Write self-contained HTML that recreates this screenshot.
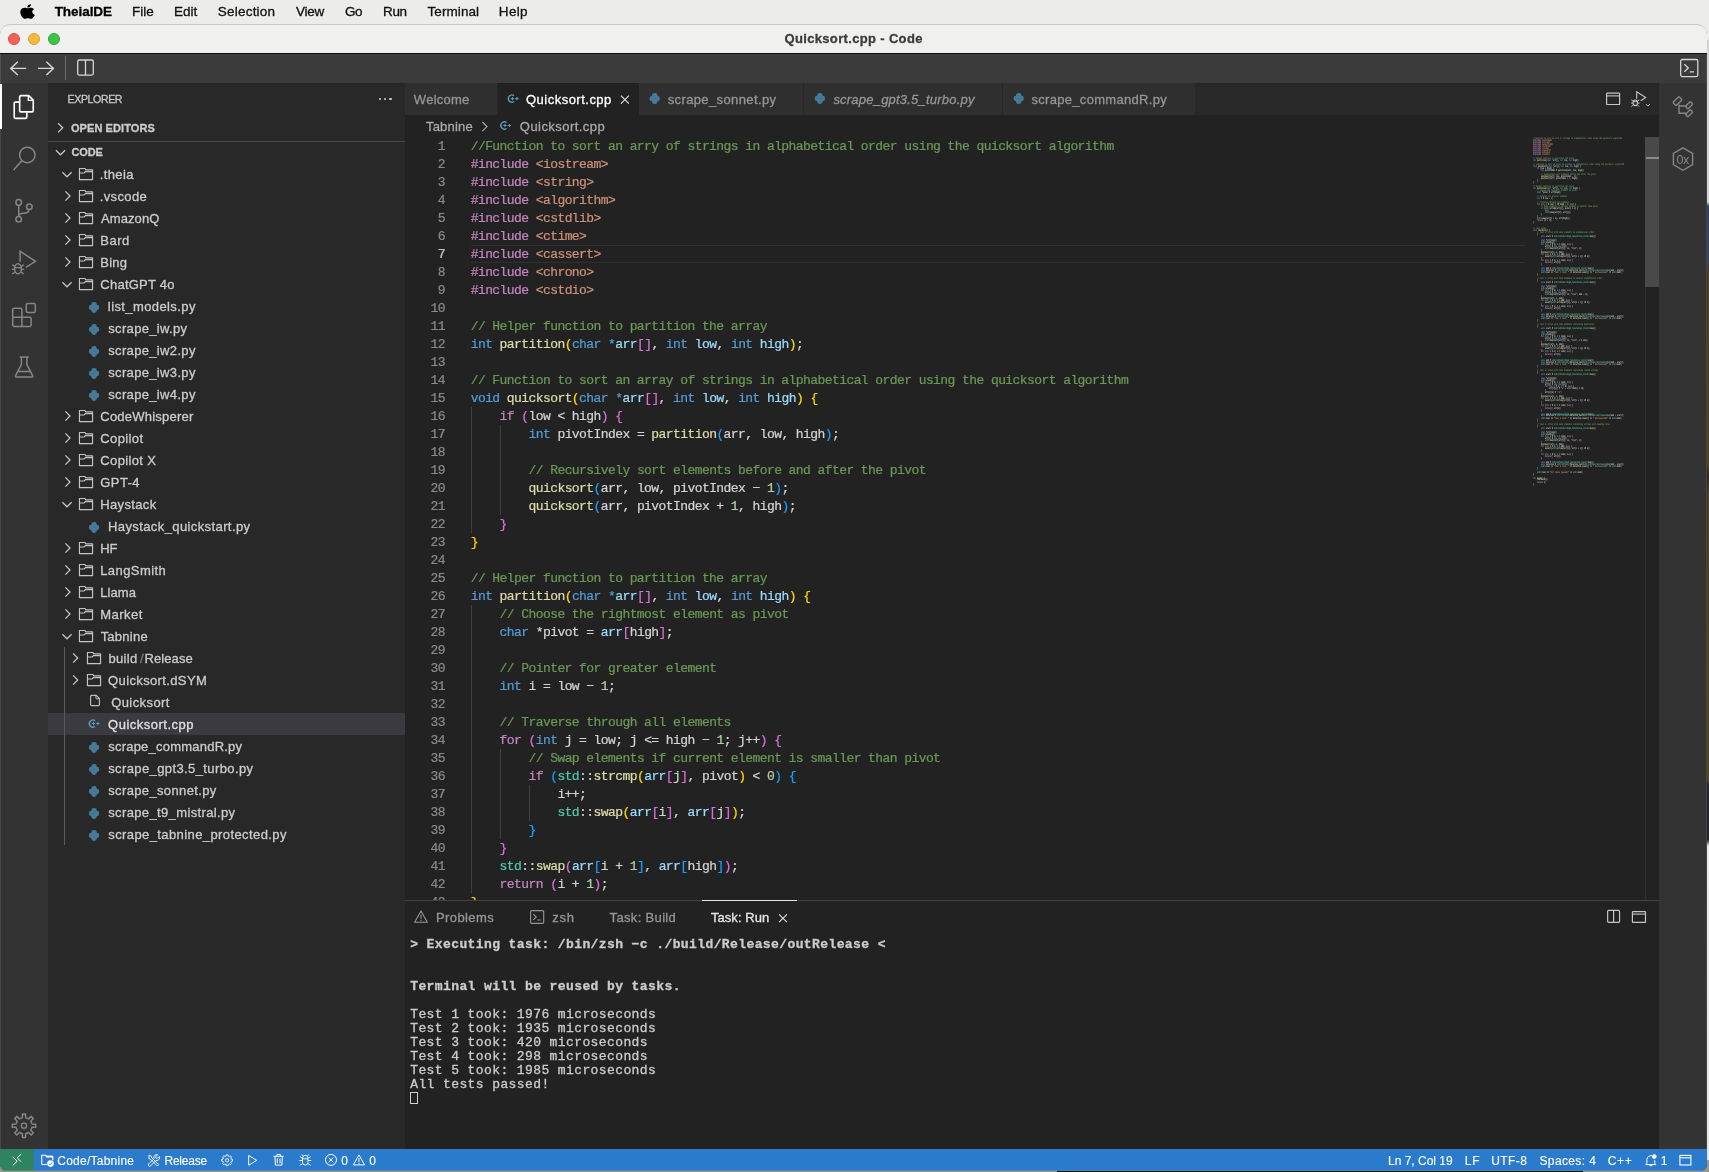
<!DOCTYPE html><html><head><meta charset="utf-8"><title>Quicksort.cpp - Code</title><style>
*{box-sizing:border-box;margin:0;padding:0}
html,body{width:1709px;height:1172px;overflow:hidden;background:#9a9a9a}
body{font-family:"Liberation Sans",sans-serif;position:relative;-webkit-font-smoothing:antialiased}
#root{position:absolute;left:0;top:0;width:1709px;height:1172px;will-change:transform;transform:translateZ(0)}
.a{position:absolute}
.t{position:absolute;white-space:pre;line-height:20px;height:20px;-webkit-text-stroke:.3px}
svg{position:absolute;overflow:visible}
.code{position:absolute;left:470.7px;top:138px;font-family:"Liberation Mono",monospace;font-size:13px;letter-spacing:-0.576px;line-height:18px;color:#d4d4d4;white-space:pre;-webkit-text-stroke:.22px}
.ln{position:absolute;left:405px;top:138px;width:40px;text-align:right;font-family:"Liberation Mono",monospace;font-size:13px;letter-spacing:-0.576px;line-height:18px;color:#8a8a8a;white-space:pre;-webkit-text-stroke:.22px}
.c{color:#6a9955}.k{color:#569cd6}.p{color:#c586c0}.s{color:#ce9178}.f{color:#dcdcaa}.v{color:#9cdcfe}.n{color:#b5cea8}.y{color:#4ec9b0}
.mm .b1,.mm .b2,.mm .b3{color:inherit}
.b1{color:#ffd700}.b2{color:#da70d6}.b3{color:#179fff}
.term{position:absolute;left:410.2px;font-family:"Liberation Mono",monospace;font-size:13px;letter-spacing:0.4px;line-height:14px;color:#cccccc;white-space:pre;-webkit-text-stroke:.300px}
</style></head><body><div id="root">
<div class="a" style="left:1700px;top:24px;width:9px;height:1148px;background:linear-gradient(to bottom,#d2d3d1 0,#d2d3d1 178px,#34406a 182px,#3a4468 232px,#4a3f1e 250px,#50441f 440px,#2d2a1c 452px,#4a3f1e 470px,#54471f 756px,#26262c 761px,#26262c 816px,#ececec 822px,#e4e4e4 1148px);"></div>
<div class="a" style="left:0px;top:1160px;width:1709px;height:12px;background:#9a958d;"></div>
<div class="a" style="left:0px;top:0px;width:1709px;height:40px;background:#ecece9;"></div>
<svg style="left:20px;top:4px;" width="16" height="16" fill="none"><g transform="translate(0.300 0.200) scale(1.2632 1.0278) translate(-1.800 -0.000)"><path fill="#000" d="M11.2 7.4c0-1.7 1.4-2.5 1.5-2.6-.8-1.2-2.1-1.3-2.5-1.4-1.1-.1-2.1.6-2.6.6s-1.4-.6-2.3-.6C4.100 3.400 3 4.100 2.400 5.200c-1.300 2.200-.300 5.400.900 7.200.600.900 1.300 1.800 2.200 1.800.900 0 1.200-.600 2.300-.600s1.400.600 2.300.600c1 0 1.600-.900 2.200-1.800.700-1 1-2 1-2-.100 0-1.900-.700-2.100-3zM9.500 2.200c.500-.600.800-1.400.700-2.200-.700 0-1.600.500-2.100 1.100-.400.500-.800 1.300-.700 2.100.800.100 1.600-.400 2.100-1z"/></g></svg>
<span class="t" style="left:54.70px;top:1.75px;font-size:13.5px;color:#000;font-weight:bold;letter-spacing:-0.063px;">TheiaIDE</span>
<span class="t" style="left:131.92px;top:1.75px;font-size:13.5px;color:#111;letter-spacing:0.070px;">File</span>
<span class="t" style="left:173.90px;top:1.75px;font-size:13.5px;color:#111;letter-spacing:0.026px;">Edit</span>
<span class="t" style="left:217.86px;top:1.75px;font-size:13.5px;color:#111;letter-spacing:0.205px;">Selection</span>
<span class="t" style="left:295.89px;top:1.75px;font-size:13.5px;color:#111;letter-spacing:-0.217px;">View</span>
<span class="t" style="left:345.07px;top:1.75px;font-size:13.5px;color:#111;letter-spacing:-0.574px;">Go</span>
<span class="t" style="left:382.92px;top:1.75px;font-size:13.5px;color:#111;letter-spacing:-0.272px;">Run</span>
<span class="t" style="left:427.53px;top:1.75px;font-size:13.5px;color:#111;letter-spacing:0.079px;">Terminal</span>
<span class="t" style="left:498.86px;top:1.75px;font-size:13.5px;color:#111;letter-spacing:0.288px;">Help</span>
<div class="a" style="left:0;top:24.5px;width:1707px;height:1146.500px;border-radius:10px 10px 7px 7px;overflow:hidden;background:#222222">
</div>
<div class="a" style="left:0;top:24px;width:1707px;height:29px;border-radius:10px 10px 0 0;background:#f0f0ee;border-top:1px solid #c6c8ca"></div>
<div class="a" style="left:0px;top:53px;width:1707px;height:1px;background:#0e0e0e;"></div>
<div class="a" style="left:8px;top:33px;width:12px;height:12px;border-radius:6px;background:#f4605a;border:0.5px solid #dd4a43"></div>
<div class="a" style="left:28px;top:33px;width:12px;height:12px;border-radius:6px;background:#f8b83c;border:0.5px solid #dc9f2c"></div>
<div class="a" style="left:48px;top:33px;width:12px;height:12px;border-radius:6px;background:#3fc24a;border:0.5px solid #2da636"></div>
<span class="t" style="left:784.47px;top:28.75px;font-size:13px;color:#3c3c3c;font-weight:bold;letter-spacing:0.341px;">Quicksort.cpp - Code</span>
<div class="a" style="left:0px;top:54px;width:1707px;height:29px;background:#3b3b3b;"></div>
<svg style="left:9px;top:59px;" width="18" height="18" fill="none"><g transform="translate(0.400 0.900) scale(1.0625 1.0000) translate(-0.000 -0.000)"><path d="M15.800 8.500H1.500M7.900 1.900L1.300 8.500 7.900 15.100" stroke="#d6d6d6" stroke-width="1.400"/></g></svg>
<svg style="left:37px;top:59px;" width="18" height="18" fill="none"><g transform="translate(0.800 0.900) scale(1.0625 1.0000) translate(-0.000 -0.000)"><path d="M.200 8.500h14.300M8.100 1.900l6.600 6.600-6.600 6.600" stroke="#d6d6d6" stroke-width="1.400"/></g></svg>
<div class="a" style="left:65.2px;top:56px;width:0.9px;height:24px;background:#6a6a6a;"></div>
<svg style="left:77px;top:59px;" width="18" height="18" fill="none"><g transform="translate(0.000 0.300)"><rect x=".700" y=".700" width="15.600" height="15.100" rx="1.500" stroke="#d6d6d6" stroke-width="1.300"/><path d="M8.500 .700v15.100" stroke="#d6d6d6" stroke-width="1.300"/></g></svg>
<svg style="left:1680px;top:58px;" width="20" height="20" fill="none"><g transform="translate(0.000 0.800)"><rect x=".700" y=".700" width="17.100" height="17.100" rx="1.500" stroke="#d6d6d6" stroke-width="1.300"/><path d="M4.300 5.500l4 3.700-4 3.700M9.700 13h4.300" stroke="#d6d6d6" stroke-width="1.300"/></g></svg>
<div class="a" style="left:0px;top:83.2px;width:48px;height:1065.8px;background:#333333;"></div>
<div class="a" style="left:0px;top:54px;width:1px;height:1110px;background:rgba(255,255,255,.100);"></div>
<div class="a" style="left:0px;top:84px;width:2px;height:45px;background:#ffffff;"></div>
<svg style="left:12px;top:94px;" width="24" height="26" fill="none"><g transform="translate(0.300 0.600) scale(0.9583 0.9577) translate(-0.000 -0.000)"><g transform="translate(-.830 -1.250)"><path d="M9.800 2.300h8.200l4.700 4.700v11a1.300 1.300 0 0 1-1.300 1.300H9.800a1.300 1.300 0 0 1-1.300-1.300V3.600a1.300 1.300 0 0 1 1.300-1.300z" stroke="#fff" stroke-width="1.700"/><path d="M17.600 2.500v4.800h4.900" stroke="#fff" stroke-width="1.500"/></g><path d="M7.500 7.800H3.300a1.300 1.300 0 0 0-1.300 1.300v14.400a1.300 1.300 0 0 0 1.300 1.300h10.600a1.300 1.300 0 0 0 1.300-1.300v-4.800" stroke="#fff" stroke-width="1.700"/></g></svg>
<svg style="left:10px;top:144px;" width="31" height="31" fill="none"><g transform="translate(0.000 0.000)"><circle cx="17.300" cy="11" r="7.700" stroke="#868686" stroke-width="1.500"/><path d="M11.800 16.800L3.600 26" stroke="#868686" stroke-width="1.500"/></g></svg>
<svg style="left:10px;top:196px;" width="31" height="31" fill="none"><g transform="translate(0.000 0.000)"><circle cx="8.700" cy="6.400" r="2.800" stroke="#868686" stroke-width="1.500"/><circle cx="19.300" cy="10.800" r="2.800" stroke="#868686" stroke-width="1.500"/><circle cx="8.700" cy="23.300" r="2.800" stroke="#868686" stroke-width="1.500"/><path d="M8.700 9.200v11.300M19 13.600c-.300 3.400-2.600 3.600-5.500 3.700-2.300.100-4.300.600-4.800 2.700" stroke="#868686" stroke-width="1.500"/></g></svg>
<svg style="left:10px;top:248px;" width="31" height="31" fill="none"><g transform="translate(0.000 0.000)"><path d="M10.100 13.800V3.300L25.500 13.300l-9.600 6.100" stroke="#868686" stroke-width="1.500" stroke-linejoin="miter"/><ellipse cx="8" cy="20.800" rx="3.400" ry="5" stroke="#868686" stroke-width="1.500"/><path d="M4.700 19.600h6.600M2.200 16.700l2.400 1.700M13.800 16.700l-2.400 1.700M1.800 21.300h2.700M11.500 21.300h2.700M2.200 26l2.600-1.800M13.800 26l-2.600-1.800" stroke="#868686" stroke-width="1.300"/></g></svg>
<svg style="left:10px;top:300px;" width="31" height="31" fill="none"><g transform="translate(0.000 0.000)"><path d="M2.700 9.700a1.500 1.500 0 0 1 1.500-1.500h6.200a1.500 1.500 0 0 1 1.500 1.500v7.500h7.700a1.500 1.500 0 0 1 1.500 1.500v6.200a1.500 1.500 0 0 1-1.500 1.500H4.200a1.500 1.500 0 0 1-1.500-1.500zM2.700 17.200h9.200v9.200" stroke="#868686" stroke-width="1.500"/><rect x="16.300" y="3.600" width="9" height="9" rx="1.500" stroke="#868686" stroke-width="1.500"/></g></svg>
<svg style="left:10px;top:352px;" width="31" height="31" fill="none"><g transform="translate(0.000 0.000)"><path d="M9.600 5h9.200M11.400 5.200v7.300L5.600 23.600a1 1 0 0 0 .900 1.500h15.200a1 1 0 0 0 .900-1.500L16.900 12.500V5.200M7.700 19.500h13" stroke="#868686" stroke-width="1.500"/></g></svg>
<svg style="left:9px;top:1110px;" width="31" height="31" fill="none"><g transform="translate(0.000 0.700)"><path d="M13.37 6.96L13.53 3.29L16.47 3.29L16.63 6.96L19.53 8.17L22.24 5.68L24.32 7.76L21.83 10.47L23.04 13.37L26.71 13.53L26.71 16.47L23.04 16.63L21.83 19.53L24.32 22.24L22.24 24.32L19.53 21.83L16.63 23.04L16.47 26.71L13.53 26.71L13.37 23.04L10.47 21.83L7.76 24.32L5.68 22.24L8.17 19.53L6.96 16.63L3.29 16.47L3.29 13.53L6.96 13.37L8.17 10.47L5.68 7.76L7.76 5.68L10.47 8.17Z" stroke="#868686" stroke-width="1.500" stroke-linejoin="round"/><circle cx="15" cy="15" r="2.600" stroke="#868686" stroke-width="1.400"/></g></svg>
<div class="a" style="left:1658.7px;top:83.2px;width:48.3px;height:1065.8px;background:#333333;"></div>
<svg style="left:1670px;top:94px;" width="27" height="27" fill="none"><g transform="translate(0.000 0.600)"><rect x="3.200" y="4.300" width="8.500" height="4.500" rx="1" transform="rotate(-45 7.400 6.500)" stroke="#868686" stroke-width="1.400"/><rect x="15.600" y="8.800" width="7" height="3.600" rx="1" transform="rotate(-45 19.100 10.600)" stroke="#868686" stroke-width="1.400"/><rect x="15.600" y="16.800" width="7" height="3.600" rx="1" transform="rotate(-45 19.100 18.600)" stroke="#868686" stroke-width="1.400"/><path d="M9 10v8.600h7.300M9 11.400h7.300" stroke="#868686" stroke-width="1.400"/></g></svg>
<svg style="left:1670px;top:146px;" width="27" height="27" fill="none"><g transform="translate(0.000 0.000)"><path d="M13 1.900l9.600 5.600v11.200l-9.600 5.600-9.600-5.600V7.500z" stroke="#868686" stroke-width="1.400"/></g></svg>
<span class="t" style="left:1676.60px;top:150.25px;font-size:12.5px;color:#868686;letter-spacing:-0.552px;-webkit-text-stroke:0;">0x</span>
<div class="a" style="left:1706px;top:54px;width:1px;height:1095px;background:rgba(255,255,255,.090);"></div>
<div class="a" style="left:48px;top:83.2px;width:357px;height:1065.8px;background:#282828;"></div>
<span class="t" style="left:67.60px;top:89.25px;font-size:10.6px;color:#c8c8c8;letter-spacing:-0.407px;">EXPLORER</span>
<div class="a" style="left:378.8px;top:98.1px;width:2.3px;height:2.3px;background:#d0d0d0;border-radius:1.200px"></div>
<div class="a" style="left:384.1px;top:98.1px;width:2.3px;height:2.3px;background:#d0d0d0;border-radius:1.200px"></div>
<div class="a" style="left:389.4px;top:98.1px;width:2.3px;height:2.3px;background:#d0d0d0;border-radius:1.200px"></div>
<svg style="left:57px;top:122px;" width="7" height="12" fill="none"><g transform="translate(0.500 0.700)"><path d="M.600 .500L5.200 5.100 .600 9.700" stroke="#c5c5c5" stroke-width="1.3"/></g></svg>
<span class="t" style="left:70.96px;top:118.25px;font-size:11px;color:#cccccc;font-weight:bold;letter-spacing:0.079px;">OPEN EDITORS</span>
<div class="a" style="left:48px;top:140.6px;width:357px;height:1px;background:#464646;"></div>
<svg style="left:55px;top:149px;" width="12" height="7" fill="none"><g transform="translate(0.400 0.700)"><path d="M.500 .500L5.100 5.100 9.700 .500" stroke="#c5c5c5" stroke-width="1.3"/></g></svg>
<span class="t" style="left:71.40px;top:142.25px;font-size:11px;color:#cccccc;font-weight:bold;letter-spacing:-0.122px;">CODE</span>
<div class="a" style="left:48px;top:713.3px;width:357px;height:21.6px;background:#3a3a40;"></div>
<div class="a" style="left:64px;top:647px;width:1px;height:198px;background:#5a5a5a;"></div>
<svg style="left:61px;top:171px;" width="12" height="7" fill="none"><g transform="translate(0.900 0.700)"><path d="M.500 .500L5.100 5.100 9.700 .500" stroke="#c5c5c5" stroke-width="1.3"/></g></svg>
<svg style="left:78px;top:167px;" width="16" height="14" fill="none"><g transform="translate(0.850 0.750)"><path d="M.600 .700H5.900L7 2.100H13.700V11.800H.600z" stroke="#c5c5c5" stroke-width="1.150" stroke-linejoin="round"/><path d="M.600 5.200H5.200L6.600 3.900H13.700" stroke="#c5c5c5" stroke-width="1.150"/></g></svg>
<span class="t" style="left:99.70px;top:164.75px;font-size:13px;color:#cccccc;letter-spacing:0.401px;">.theia</span>
<svg style="left:64px;top:190px;" width="7" height="12" fill="none"><g transform="translate(0.800 0.900)"><path d="M.600 .500L5.200 5.100 .600 9.700" stroke="#c5c5c5" stroke-width="1.3"/></g></svg>
<svg style="left:78px;top:189px;" width="16" height="14" fill="none"><g transform="translate(0.850 0.750)"><path d="M.600 .700H5.900L7 2.100H13.700V11.800H.600z" stroke="#c5c5c5" stroke-width="1.150" stroke-linejoin="round"/><path d="M.600 5.200H5.200L6.600 3.900H13.700" stroke="#c5c5c5" stroke-width="1.150"/></g></svg>
<span class="t" style="left:99.70px;top:186.75px;font-size:13px;color:#cccccc;letter-spacing:0.389px;">.vscode</span>
<svg style="left:64px;top:212px;" width="7" height="12" fill="none"><g transform="translate(0.800 0.900)"><path d="M.600 .500L5.200 5.100 .600 9.700" stroke="#c5c5c5" stroke-width="1.3"/></g></svg>
<svg style="left:78px;top:211px;" width="16" height="14" fill="none"><g transform="translate(0.850 0.750)"><path d="M.600 .700H5.900L7 2.100H13.700V11.800H.600z" stroke="#c5c5c5" stroke-width="1.150" stroke-linejoin="round"/><path d="M.600 5.200H5.200L6.600 3.900H13.700" stroke="#c5c5c5" stroke-width="1.150"/></g></svg>
<span class="t" style="left:100.90px;top:208.75px;font-size:13px;color:#cccccc;letter-spacing:0.120px;">AmazonQ</span>
<svg style="left:64px;top:234px;" width="7" height="12" fill="none"><g transform="translate(0.800 0.900)"><path d="M.600 .500L5.200 5.100 .600 9.700" stroke="#c5c5c5" stroke-width="1.3"/></g></svg>
<svg style="left:78px;top:233px;" width="16" height="14" fill="none"><g transform="translate(0.850 0.750)"><path d="M.600 .700H5.900L7 2.100H13.700V11.800H.600z" stroke="#c5c5c5" stroke-width="1.150" stroke-linejoin="round"/><path d="M.600 5.200H5.200L6.600 3.900H13.700" stroke="#c5c5c5" stroke-width="1.150"/></g></svg>
<span class="t" style="left:100.20px;top:230.75px;font-size:13px;color:#cccccc;letter-spacing:0.528px;">Bard</span>
<svg style="left:64px;top:256px;" width="7" height="12" fill="none"><g transform="translate(0.800 0.900)"><path d="M.600 .500L5.200 5.100 .600 9.700" stroke="#c5c5c5" stroke-width="1.3"/></g></svg>
<svg style="left:78px;top:255px;" width="16" height="14" fill="none"><g transform="translate(0.850 0.750)"><path d="M.600 .700H5.900L7 2.100H13.700V11.800H.600z" stroke="#c5c5c5" stroke-width="1.150" stroke-linejoin="round"/><path d="M.600 5.200H5.200L6.600 3.900H13.700" stroke="#c5c5c5" stroke-width="1.150"/></g></svg>
<span class="t" style="left:100.20px;top:252.75px;font-size:13px;color:#cccccc;letter-spacing:0.294px;">Bing</span>
<svg style="left:61px;top:281px;" width="12" height="7" fill="none"><g transform="translate(0.900 0.700)"><path d="M.500 .500L5.100 5.100 9.700 .500" stroke="#c5c5c5" stroke-width="1.3"/></g></svg>
<svg style="left:78px;top:277px;" width="16" height="14" fill="none"><g transform="translate(0.850 0.750)"><path d="M.600 .700H5.900L7 2.100H13.700V11.800H.600z" stroke="#c5c5c5" stroke-width="1.150" stroke-linejoin="round"/><path d="M.600 5.200H5.200L6.600 3.900H13.700" stroke="#c5c5c5" stroke-width="1.150"/></g></svg>
<span class="t" style="left:100.30px;top:274.75px;font-size:13px;color:#cccccc;letter-spacing:0.250px;">ChatGPT 4o</span>
<svg style="left:88px;top:302px;" width="12" height="12" fill="none"><g transform="translate(0.900 0.000)"><rect x="2.450" y="0" width="5.400" height="11" rx="2.400" fill="#467b98"/><rect x="0" y="2.800" width="10.300" height="5.400" rx="2.400" fill="#467b98"/><path d="M2.600 5.750h3.100M4.600 5.250h3.100" stroke="#3f6f8a" stroke-width=".500"/><circle cx="3.900" cy="1.700" r=".450" fill="#3a657f"/><circle cx="6.400" cy="9.300" r=".450" fill="#3a657f"/></g></svg>
<span class="t" style="left:107.85px;top:296.75px;font-size:13px;color:#cccccc;letter-spacing:0.400px;">list_models.py</span>
<svg style="left:88px;top:324px;" width="12" height="12" fill="none"><g transform="translate(0.900 0.000)"><rect x="2.450" y="0" width="5.400" height="11" rx="2.400" fill="#467b98"/><rect x="0" y="2.800" width="10.300" height="5.400" rx="2.400" fill="#467b98"/><path d="M2.600 5.750h3.100M4.600 5.250h3.100" stroke="#3f6f8a" stroke-width=".500"/><circle cx="3.900" cy="1.700" r=".450" fill="#3a657f"/><circle cx="6.400" cy="9.300" r=".450" fill="#3a657f"/></g></svg>
<span class="t" style="left:108.24px;top:318.75px;font-size:13px;color:#cccccc;letter-spacing:0.340px;">scrape_iw.py</span>
<svg style="left:88px;top:346px;" width="12" height="12" fill="none"><g transform="translate(0.900 0.000)"><rect x="2.450" y="0" width="5.400" height="11" rx="2.400" fill="#467b98"/><rect x="0" y="2.800" width="10.300" height="5.400" rx="2.400" fill="#467b98"/><path d="M2.600 5.750h3.100M4.600 5.250h3.100" stroke="#3f6f8a" stroke-width=".500"/><circle cx="3.900" cy="1.700" r=".450" fill="#3a657f"/><circle cx="6.400" cy="9.300" r=".450" fill="#3a657f"/></g></svg>
<span class="t" style="left:108.24px;top:340.75px;font-size:13px;color:#cccccc;letter-spacing:0.340px;">scrape_iw2.py</span>
<svg style="left:88px;top:368px;" width="12" height="12" fill="none"><g transform="translate(0.900 0.000)"><rect x="2.450" y="0" width="5.400" height="11" rx="2.400" fill="#467b98"/><rect x="0" y="2.800" width="10.300" height="5.400" rx="2.400" fill="#467b98"/><path d="M2.600 5.750h3.100M4.600 5.250h3.100" stroke="#3f6f8a" stroke-width=".500"/><circle cx="3.900" cy="1.700" r=".450" fill="#3a657f"/><circle cx="6.400" cy="9.300" r=".450" fill="#3a657f"/></g></svg>
<span class="t" style="left:108.24px;top:362.75px;font-size:13px;color:#cccccc;letter-spacing:0.340px;">scrape_iw3.py</span>
<svg style="left:88px;top:390px;" width="12" height="12" fill="none"><g transform="translate(0.900 0.000)"><rect x="2.450" y="0" width="5.400" height="11" rx="2.400" fill="#467b98"/><rect x="0" y="2.800" width="10.300" height="5.400" rx="2.400" fill="#467b98"/><path d="M2.600 5.750h3.100M4.600 5.250h3.100" stroke="#3f6f8a" stroke-width=".500"/><circle cx="3.900" cy="1.700" r=".450" fill="#3a657f"/><circle cx="6.400" cy="9.300" r=".450" fill="#3a657f"/></g></svg>
<span class="t" style="left:108.24px;top:384.75px;font-size:13px;color:#cccccc;letter-spacing:0.340px;">scrape_iw4.py</span>
<svg style="left:64px;top:410px;" width="7" height="12" fill="none"><g transform="translate(0.800 0.900)"><path d="M.600 .500L5.200 5.100 .600 9.700" stroke="#c5c5c5" stroke-width="1.3"/></g></svg>
<svg style="left:78px;top:409px;" width="16" height="14" fill="none"><g transform="translate(0.850 0.750)"><path d="M.600 .700H5.900L7 2.100H13.700V11.800H.600z" stroke="#c5c5c5" stroke-width="1.150" stroke-linejoin="round"/><path d="M.600 5.200H5.200L6.600 3.900H13.700" stroke="#c5c5c5" stroke-width="1.150"/></g></svg>
<span class="t" style="left:100.30px;top:406.75px;font-size:13px;color:#cccccc;letter-spacing:0.228px;">CodeWhisperer</span>
<svg style="left:64px;top:432px;" width="7" height="12" fill="none"><g transform="translate(0.800 0.900)"><path d="M.600 .500L5.200 5.100 .600 9.700" stroke="#c5c5c5" stroke-width="1.3"/></g></svg>
<svg style="left:78px;top:431px;" width="16" height="14" fill="none"><g transform="translate(0.850 0.750)"><path d="M.600 .700H5.900L7 2.100H13.700V11.800H.600z" stroke="#c5c5c5" stroke-width="1.150" stroke-linejoin="round"/><path d="M.600 5.200H5.200L6.600 3.900H13.700" stroke="#c5c5c5" stroke-width="1.150"/></g></svg>
<span class="t" style="left:100.30px;top:428.75px;font-size:13px;color:#cccccc;letter-spacing:0.385px;">Copilot</span>
<svg style="left:64px;top:454px;" width="7" height="12" fill="none"><g transform="translate(0.800 0.900)"><path d="M.600 .500L5.200 5.100 .600 9.700" stroke="#c5c5c5" stroke-width="1.3"/></g></svg>
<svg style="left:78px;top:453px;" width="16" height="14" fill="none"><g transform="translate(0.850 0.750)"><path d="M.600 .700H5.900L7 2.100H13.700V11.800H.600z" stroke="#c5c5c5" stroke-width="1.150" stroke-linejoin="round"/><path d="M.600 5.200H5.200L6.600 3.900H13.700" stroke="#c5c5c5" stroke-width="1.150"/></g></svg>
<span class="t" style="left:100.30px;top:450.75px;font-size:13px;color:#cccccc;letter-spacing:0.362px;">Copilot X</span>
<svg style="left:64px;top:476px;" width="7" height="12" fill="none"><g transform="translate(0.800 0.900)"><path d="M.600 .500L5.200 5.100 .600 9.700" stroke="#c5c5c5" stroke-width="1.3"/></g></svg>
<svg style="left:78px;top:475px;" width="16" height="14" fill="none"><g transform="translate(0.850 0.750)"><path d="M.600 .700H5.900L7 2.100H13.700V11.800H.600z" stroke="#c5c5c5" stroke-width="1.150" stroke-linejoin="round"/><path d="M.600 5.200H5.200L6.600 3.900H13.700" stroke="#c5c5c5" stroke-width="1.150"/></g></svg>
<span class="t" style="left:100.30px;top:472.75px;font-size:13px;color:#cccccc;letter-spacing:0.407px;">GPT-4</span>
<svg style="left:61px;top:501px;" width="12" height="7" fill="none"><g transform="translate(0.900 0.700)"><path d="M.500 .500L5.100 5.100 9.700 .500" stroke="#c5c5c5" stroke-width="1.3"/></g></svg>
<svg style="left:78px;top:497px;" width="16" height="14" fill="none"><g transform="translate(0.850 0.750)"><path d="M.600 .700H5.900L7 2.100H13.700V11.800H.600z" stroke="#c5c5c5" stroke-width="1.150" stroke-linejoin="round"/><path d="M.600 5.200H5.200L6.600 3.900H13.700" stroke="#c5c5c5" stroke-width="1.150"/></g></svg>
<span class="t" style="left:100.20px;top:494.75px;font-size:13px;color:#cccccc;letter-spacing:0.361px;">Haystack</span>
<svg style="left:88px;top:522px;" width="12" height="12" fill="none"><g transform="translate(0.900 0.000)"><rect x="2.450" y="0" width="5.400" height="11" rx="2.400" fill="#467b98"/><rect x="0" y="2.800" width="10.300" height="5.400" rx="2.400" fill="#467b98"/><path d="M2.600 5.750h3.100M4.600 5.250h3.100" stroke="#3f6f8a" stroke-width=".500"/><circle cx="3.900" cy="1.700" r=".450" fill="#3a657f"/><circle cx="6.400" cy="9.300" r=".450" fill="#3a657f"/></g></svg>
<span class="t" style="left:108.02px;top:516.75px;font-size:13px;color:#cccccc;letter-spacing:0.397px;">Haystack_quickstart.py</span>
<svg style="left:64px;top:542px;" width="7" height="12" fill="none"><g transform="translate(0.800 0.900)"><path d="M.600 .500L5.200 5.100 .600 9.700" stroke="#c5c5c5" stroke-width="1.3"/></g></svg>
<svg style="left:78px;top:541px;" width="16" height="14" fill="none"><g transform="translate(0.850 0.750)"><path d="M.600 .700H5.900L7 2.100H13.700V11.800H.600z" stroke="#c5c5c5" stroke-width="1.150" stroke-linejoin="round"/><path d="M.600 5.200H5.200L6.600 3.900H13.700" stroke="#c5c5c5" stroke-width="1.150"/></g></svg>
<span class="t" style="left:100.20px;top:538.75px;font-size:13px;color:#cccccc;letter-spacing:0.030px;">HF</span>
<svg style="left:64px;top:564px;" width="7" height="12" fill="none"><g transform="translate(0.800 0.900)"><path d="M.600 .500L5.200 5.100 .600 9.700" stroke="#c5c5c5" stroke-width="1.3"/></g></svg>
<svg style="left:78px;top:563px;" width="16" height="14" fill="none"><g transform="translate(0.850 0.750)"><path d="M.600 .700H5.900L7 2.100H13.700V11.800H.600z" stroke="#c5c5c5" stroke-width="1.150" stroke-linejoin="round"/><path d="M.600 5.200H5.200L6.600 3.900H13.700" stroke="#c5c5c5" stroke-width="1.150"/></g></svg>
<span class="t" style="left:100.20px;top:560.75px;font-size:13px;color:#cccccc;letter-spacing:0.427px;">LangSmith</span>
<svg style="left:64px;top:586px;" width="7" height="12" fill="none"><g transform="translate(0.800 0.900)"><path d="M.600 .500L5.200 5.100 .600 9.700" stroke="#c5c5c5" stroke-width="1.3"/></g></svg>
<svg style="left:78px;top:585px;" width="16" height="14" fill="none"><g transform="translate(0.850 0.750)"><path d="M.600 .700H5.900L7 2.100H13.700V11.800H.600z" stroke="#c5c5c5" stroke-width="1.150" stroke-linejoin="round"/><path d="M.600 5.200H5.200L6.600 3.900H13.700" stroke="#c5c5c5" stroke-width="1.150"/></g></svg>
<span class="t" style="left:100.20px;top:582.75px;font-size:13px;color:#cccccc;letter-spacing:0.079px;">Llama</span>
<svg style="left:64px;top:608px;" width="7" height="12" fill="none"><g transform="translate(0.800 0.900)"><path d="M.600 .500L5.200 5.100 .600 9.700" stroke="#c5c5c5" stroke-width="1.3"/></g></svg>
<svg style="left:78px;top:607px;" width="16" height="14" fill="none"><g transform="translate(0.850 0.750)"><path d="M.600 .700H5.900L7 2.100H13.700V11.800H.600z" stroke="#c5c5c5" stroke-width="1.150" stroke-linejoin="round"/><path d="M.600 5.200H5.200L6.600 3.900H13.700" stroke="#c5c5c5" stroke-width="1.150"/></g></svg>
<span class="t" style="left:100.20px;top:604.75px;font-size:13px;color:#cccccc;letter-spacing:0.506px;">Market</span>
<svg style="left:61px;top:633px;" width="12" height="7" fill="none"><g transform="translate(0.900 0.700)"><path d="M.500 .500L5.100 5.100 9.700 .500" stroke="#c5c5c5" stroke-width="1.3"/></g></svg>
<svg style="left:78px;top:629px;" width="16" height="14" fill="none"><g transform="translate(0.850 0.750)"><path d="M.600 .700H5.900L7 2.100H13.700V11.800H.600z" stroke="#c5c5c5" stroke-width="1.150" stroke-linejoin="round"/><path d="M.600 5.200H5.200L6.600 3.900H13.700" stroke="#c5c5c5" stroke-width="1.150"/></g></svg>
<span class="t" style="left:100.63px;top:626.75px;font-size:13px;color:#cccccc;letter-spacing:0.248px;">Tabnine</span>
<svg style="left:72px;top:652px;" width="7" height="12" fill="none"><g transform="translate(0.500 0.900)"><path d="M.600 .500L5.200 5.100 .600 9.700" stroke="#c5c5c5" stroke-width="1.3"/></g></svg>
<svg style="left:86px;top:651px;" width="16" height="14" fill="none"><g transform="translate(0.850 0.750)"><path d="M.600 .700H5.900L7 2.100H13.700V11.800H.600z" stroke="#c5c5c5" stroke-width="1.150" stroke-linejoin="round"/><path d="M.600 5.200H5.200L6.600 3.900H13.700" stroke="#c5c5c5" stroke-width="1.150"/></g></svg>
<span class="t" style="left:108.50px;top:648.75px;font-size:13px;color:#cccccc;letter-spacing:0.291px;">build</span>
<span class="t" style="left:140.00px;top:648.75px;font-size:13px;color:#7d7d7d;">/</span>
<span class="t" style="left:144.50px;top:648.75px;font-size:13px;color:#cccccc;letter-spacing:0.089px;">Release</span>
<svg style="left:72px;top:674px;" width="7" height="12" fill="none"><g transform="translate(0.500 0.900)"><path d="M.600 .500L5.200 5.100 .600 9.700" stroke="#c5c5c5" stroke-width="1.3"/></g></svg>
<svg style="left:86px;top:673px;" width="16" height="14" fill="none"><g transform="translate(0.850 0.750)"><path d="M.600 .700H5.900L7 2.100H13.700V11.800H.600z" stroke="#c5c5c5" stroke-width="1.150" stroke-linejoin="round"/><path d="M.600 5.200H5.200L6.600 3.900H13.700" stroke="#c5c5c5" stroke-width="1.150"/></g></svg>
<span class="t" style="left:108.10px;top:670.75px;font-size:13px;color:#cccccc;letter-spacing:0.367px;">Quicksort.dSYM</span>
<svg style="left:90px;top:694px;" width="11" height="13" fill="none"><g transform="translate(0.000 0.800)"><path d="M1.600 .600h4.600l3.200 3.200v6a1 1 0 0 1-1 1H1.600a1 1 0 0 1-1-1V1.600a1 1 0 0 1 1-1z" stroke="#bdbdbd" stroke-width="1.150"/><path d="M5.900 .800v2.400a.800.800 0 0 0 .800.800h2.500" stroke="#bdbdbd" stroke-width="1"/></g></svg>
<span class="t" style="left:111.16px;top:692.75px;font-size:13px;color:#cccccc;letter-spacing:0.421px;">Quicksort</span>
<svg style="left:88px;top:718px;" width="13" height="12" fill="none"><g transform="translate(0.500 0.100)"><path d="M6.500 2.550A3.600 3.600 0 1 0 6.500 8.450" stroke="#5b9fbe" stroke-width="1.350"/><path d="M3.400 5.500h3.200M5 3.900v3.200M7.800 5.500h3.200M9.400 3.900v3.200" stroke="#5b9fbe" stroke-width="1.050"/></g></svg>
<span class="t" style="left:108.10px;top:714.75px;font-size:13px;color:#e0e0e0;letter-spacing:0.498px;">Quicksort.cpp</span>
<svg style="left:88px;top:742px;" width="12" height="12" fill="none"><g transform="translate(0.900 0.000)"><rect x="2.450" y="0" width="5.400" height="11" rx="2.400" fill="#467b98"/><rect x="0" y="2.800" width="10.300" height="5.400" rx="2.400" fill="#467b98"/><path d="M2.600 5.750h3.100M4.600 5.250h3.100" stroke="#3f6f8a" stroke-width=".500"/><circle cx="3.900" cy="1.700" r=".450" fill="#3a657f"/><circle cx="6.400" cy="9.300" r=".450" fill="#3a657f"/></g></svg>
<span class="t" style="left:108.24px;top:736.75px;font-size:13px;color:#cccccc;letter-spacing:0.219px;">scrape_commandR.py</span>
<svg style="left:88px;top:764px;" width="12" height="12" fill="none"><g transform="translate(0.900 0.000)"><rect x="2.450" y="0" width="5.400" height="11" rx="2.400" fill="#467b98"/><rect x="0" y="2.800" width="10.300" height="5.400" rx="2.400" fill="#467b98"/><path d="M2.600 5.750h3.100M4.600 5.250h3.100" stroke="#3f6f8a" stroke-width=".500"/><circle cx="3.900" cy="1.700" r=".450" fill="#3a657f"/><circle cx="6.400" cy="9.300" r=".450" fill="#3a657f"/></g></svg>
<span class="t" style="left:108.24px;top:758.75px;font-size:13px;color:#cccccc;letter-spacing:0.389px;">scrape_gpt3.5_turbo.py</span>
<svg style="left:88px;top:786px;" width="12" height="12" fill="none"><g transform="translate(0.900 0.000)"><rect x="2.450" y="0" width="5.400" height="11" rx="2.400" fill="#467b98"/><rect x="0" y="2.800" width="10.300" height="5.400" rx="2.400" fill="#467b98"/><path d="M2.600 5.750h3.100M4.600 5.250h3.100" stroke="#3f6f8a" stroke-width=".500"/><circle cx="3.900" cy="1.700" r=".450" fill="#3a657f"/><circle cx="6.400" cy="9.300" r=".450" fill="#3a657f"/></g></svg>
<span class="t" style="left:108.24px;top:780.75px;font-size:13px;color:#cccccc;letter-spacing:0.360px;">scrape_sonnet.py</span>
<svg style="left:88px;top:808px;" width="12" height="12" fill="none"><g transform="translate(0.900 0.000)"><rect x="2.450" y="0" width="5.400" height="11" rx="2.400" fill="#467b98"/><rect x="0" y="2.800" width="10.300" height="5.400" rx="2.400" fill="#467b98"/><path d="M2.600 5.750h3.100M4.600 5.250h3.100" stroke="#3f6f8a" stroke-width=".500"/><circle cx="3.900" cy="1.700" r=".450" fill="#3a657f"/><circle cx="6.400" cy="9.300" r=".450" fill="#3a657f"/></g></svg>
<span class="t" style="left:108.24px;top:802.75px;font-size:13px;color:#cccccc;letter-spacing:0.365px;">scrape_t9_mistral.py</span>
<svg style="left:88px;top:830px;" width="12" height="12" fill="none"><g transform="translate(0.900 0.000)"><rect x="2.450" y="0" width="5.400" height="11" rx="2.400" fill="#467b98"/><rect x="0" y="2.800" width="10.300" height="5.400" rx="2.400" fill="#467b98"/><path d="M2.600 5.750h3.100M4.600 5.250h3.100" stroke="#3f6f8a" stroke-width=".500"/><circle cx="3.900" cy="1.700" r=".450" fill="#3a657f"/><circle cx="6.400" cy="9.300" r=".450" fill="#3a657f"/></g></svg>
<span class="t" style="left:108.24px;top:824.75px;font-size:13px;color:#cccccc;letter-spacing:0.405px;">scrape_tabnine_protected.py</span>
<div class="a" style="left:405px;top:83.2px;width:1253.7px;height:31.8px;background:#282828;"></div>
<div class="a" style="left:405px;top:83.2px;width:92.6px;height:31.8px;background:#2f2f2f;border-right:1px solid #272727"></div>
<div class="a" style="left:497.6px;top:83.2px;width:141.3px;height:31.8px;background:#222222;"></div>
<div class="a" style="left:638.9px;top:83.2px;width:165.4px;height:31.8px;background:#2f2f2f;border-right:1px solid #272727"></div>
<div class="a" style="left:804.3px;top:83.2px;width:198.9px;height:31.8px;background:#2f2f2f;border-right:1px solid #272727"></div>
<div class="a" style="left:1003.2px;top:83.2px;width:191.6px;height:31.8px;background:#2f2f2f;"></div>
<span class="t" style="left:413.87px;top:89.75px;font-size:13px;color:#969696;letter-spacing:0.251px;">Welcome</span>
<svg style="left:507px;top:93px;" width="13" height="12" fill="none"><g transform="translate(0.500 0.100)"><path d="M6.500 2.550A3.600 3.600 0 1 0 6.500 8.450" stroke="#5b9fbe" stroke-width="1.350"/><path d="M3.400 5.500h3.200M5 3.900v3.200M7.800 5.500h3.200M9.400 3.900v3.200" stroke="#5b9fbe" stroke-width="1.050"/></g></svg>
<span class="t" style="left:526.00px;top:89.75px;font-size:13px;color:#ffffff;letter-spacing:0.487px;">Quicksort.cpp</span>
<svg style="left:620px;top:95px;" width="10" height="10" fill="none"><g transform="translate(0.400 0.200)"><path d="M.500 .500l8 8M8.500 .500l-8 8" stroke="#e0e0e0" stroke-width="1.200"/></g></svg>
<svg style="left:649px;top:93px;" width="12" height="12" fill="none"><g transform="translate(0.550 0.100)"><rect x="2.450" y="0" width="5.400" height="11" rx="2.400" fill="#467b98"/><rect x="0" y="2.800" width="10.300" height="5.400" rx="2.400" fill="#467b98"/><path d="M2.600 5.750h3.100M4.600 5.250h3.100" stroke="#3f6f8a" stroke-width=".500"/><circle cx="3.900" cy="1.700" r=".450" fill="#3a657f"/><circle cx="6.400" cy="9.300" r=".450" fill="#3a657f"/></g></svg>
<span class="t" style="left:667.66px;top:89.75px;font-size:13px;color:#969696;letter-spacing:0.383px;">scrape_sonnet.py</span>
<svg style="left:814px;top:93px;" width="12" height="12" fill="none"><g transform="translate(0.750 0.000)"><rect x="2.450" y="0" width="5.400" height="11" rx="2.400" fill="#467b98"/><rect x="0" y="2.800" width="10.300" height="5.400" rx="2.400" fill="#467b98"/><path d="M2.600 5.750h3.100M4.600 5.250h3.100" stroke="#3f6f8a" stroke-width=".500"/><circle cx="3.900" cy="1.700" r=".450" fill="#3a657f"/><circle cx="6.400" cy="9.300" r=".450" fill="#3a657f"/></g></svg>
<span class="t" style="left:833.38px;top:89.75px;font-size:13px;color:#969696;font-style:italic;letter-spacing:0.215px;">scrape_gpt3.5_turbo.py</span>
<svg style="left:1013px;top:93px;" width="12" height="12" fill="none"><g transform="translate(0.550 0.000)"><rect x="2.450" y="0" width="5.400" height="11" rx="2.400" fill="#467b98"/><rect x="0" y="2.800" width="10.300" height="5.400" rx="2.400" fill="#467b98"/><path d="M2.600 5.750h3.100M4.600 5.250h3.100" stroke="#3f6f8a" stroke-width=".500"/><circle cx="3.900" cy="1.700" r=".450" fill="#3a657f"/><circle cx="6.400" cy="9.300" r=".450" fill="#3a657f"/></g></svg>
<span class="t" style="left:1031.48px;top:89.75px;font-size:13px;color:#969696;letter-spacing:0.306px;">scrape_commandR.py</span>
<svg style="left:1606px;top:92px;" width="16" height="14" fill="none"><g transform="translate(0.000 0.600)"><rect x=".600" y=".600" width="13" height="11.300" rx=".600" stroke="#c5c5c5" stroke-width="1.200"/><path d="M.600 3.300h13" stroke="#c5c5c5" stroke-width="1.100"/></g></svg>
<svg style="left:1630px;top:90px;" width="21" height="19" fill="none"><g transform="translate(0.700 0.300)"><path d="M6 8.500V1.500l9 5.700-5 3.200" stroke="#c5c5c5" stroke-width="1.100"/><ellipse cx="4.600" cy="12.500" rx="2.200" ry="2.800" stroke="#c5c5c5" stroke-width="1.100"/><path d="M2.400 11.300h4.400M.600 9.600l1.900 1.200M8.600 9.600l-1.900 1.200M.300 12.800h2M6.900 12.800h2M.600 16.200l2-1.500M8.600 16.200l-2-1.500" stroke="#c5c5c5" stroke-width=".900"/><path d="M15.200 13.800l2 2 2-2" stroke="#c5c5c5" stroke-width=".900"/></g></svg>
<div class="a" style="left:405px;top:115px;width:1253.7px;height:785.3px;background:#222222;"></div>
<span class="t" style="left:425.95px;top:116.75px;font-size:13px;color:#a9a9a9;letter-spacing:0.209px;">Tabnine</span>
<svg style="left:481px;top:121px;" width="7" height="12" fill="none"><g transform="translate(0.800 0.500)"><path d="M.600 .500L5.200 5.100 .600 9.700" stroke="#a9a9a9" stroke-width="1.2"/></g></svg>
<svg style="left:500px;top:120px;" width="13" height="12" fill="none"><g transform="translate(0.000 0.000)"><path d="M6.500 2.550A3.600 3.600 0 1 0 6.500 8.450" stroke="#5b9fbe" stroke-width="1.350"/><path d="M3.400 5.500h3.200M5 3.900v3.200M7.800 5.500h3.200M9.400 3.900v3.200" stroke="#5b9fbe" stroke-width="1.050"/></g></svg>
<span class="t" style="left:519.85px;top:116.75px;font-size:13px;color:#a9a9a9;letter-spacing:0.445px;">Quicksort.cpp</span>
<div class="a" style="left:405px;top:137px;width:1253.700px;height:763.300px;overflow:hidden">
<div class="a" style="left:66px;top:108px;width:1054px;height:18px;border-top:1.500px solid #303030;border-bottom:1.500px solid #303030"></div>
<div class="a" style="left:66px;top:270px;width:1px;height:126px;background:#404040"></div>
<div class="a" style="left:95px;top:288px;width:1px;height:90px;background:#404040"></div>
<div class="a" style="left:66px;top:468px;width:1px;height:288px;background:#404040"></div>
<div class="a" style="left:95px;top:612px;width:1px;height:90px;background:#404040"></div>
<div class="a" style="left:124px;top:648px;width:1px;height:36px;background:#404040"></div>
</div>
<div class="ln">1
2
3
4
5
6
<span style="color:#c6c6c6">7</span>
8
9
10
11
12
13
14
15
16
17
18
19
20
21
22
23
24
25
26
27
28
29
30
31
32
33
34
35
36
37
38
39
40
41
42
43</div>
<div class="code"><span class="c">//Function to sort an arry of strings in alphabetical order using the quicksort algorithm</span>
<span class="p">#include</span> <span class="s">&lt;iostream&gt;</span>
<span class="p">#include</span> <span class="s">&lt;string&gt;</span>
<span class="p">#include</span> <span class="s">&lt;algorithm&gt;</span>
<span class="p">#include</span> <span class="s">&lt;cstdlib&gt;</span>
<span class="p">#include</span> <span class="s">&lt;ctime&gt;</span>
<span class="p">#include</span> <span class="s">&lt;cassert&gt;</span>
<span class="p">#include</span> <span class="s">&lt;chrono&gt;</span>
<span class="p">#include</span> <span class="s">&lt;cstdio&gt;</span>

<span class="c">// Helper function to partition the array</span>
<span class="k">int</span> <span class="f">partition</span><span class="b1">(</span><span class="k">char</span> <span class="k">*</span><span class="v">arr</span><span class="b2">[]</span>, <span class="k">int</span> <span class="v">low</span>, <span class="k">int</span> <span class="v">high</span><span class="b1">)</span>;

<span class="c">// Function to sort an array of strings in alphabetical order using the quicksort algorithm</span>
<span class="k">void</span> <span class="f">quicksort</span><span class="b1">(</span><span class="k">char</span> <span class="k">*</span><span class="v">arr</span><span class="b2">[]</span>, <span class="k">int</span> <span class="v">low</span>, <span class="k">int</span> <span class="v">high</span><span class="b1">)</span> <span class="b1">{</span>
    <span class="p">if</span> <span class="b2">(</span>low &lt; high<span class="b2">)</span> <span class="b2">{</span>
        <span class="k">int</span> pivotIndex = <span class="f">partition</span><span class="b3">(</span>arr, low, high<span class="b3">)</span>;

        <span class="c">// Recursively sort elements before and after the pivot</span>
        <span class="f">quicksort</span><span class="b3">(</span>arr, low, pivotIndex − <span class="n">1</span><span class="b3">)</span>;
        <span class="f">quicksort</span><span class="b3">(</span>arr, pivotIndex + <span class="n">1</span>, high<span class="b3">)</span>;
    <span class="b2">}</span>
<span class="b1">}</span>

<span class="c">// Helper function to partition the array</span>
<span class="k">int</span> <span class="f">partition</span><span class="b1">(</span><span class="k">char</span> <span class="k">*</span><span class="v">arr</span><span class="b2">[]</span>, <span class="k">int</span> <span class="v">low</span>, <span class="k">int</span> <span class="v">high</span><span class="b1">)</span> <span class="b1">{</span>
    <span class="c">// Choose the rightmost element as pivot</span>
    <span class="k">char</span> *pivot = <span class="v">arr</span><span class="b2">[</span>high<span class="b2">]</span>;

    <span class="c">// Pointer for greater element</span>
    <span class="k">int</span> i = low − <span class="n">1</span>;

    <span class="c">// Traverse through all elements</span>
    <span class="p">for</span> <span class="b2">(</span><span class="k">int</span> j = low; j &lt;= high − <span class="n">1</span>; j++<span class="b2">)</span> <span class="b2">{</span>
        <span class="c">// Swap elements if current element is smaller than pivot</span>
        <span class="p">if</span> <span class="b3">(</span><span class="y">std</span>::<span class="f">strcmp</span><span class="b1">(</span><span class="v">arr</span><span class="b2">[</span>j<span class="b2">]</span>, pivot<span class="b1">)</span> &lt; <span class="n">0</span><span class="b3">)</span> <span class="b3">{</span>
            i++;
            <span class="y">std</span>::<span class="f">swap</span><span class="b1">(</span><span class="v">arr</span><span class="b2">[</span>i<span class="b2">]</span>, <span class="v">arr</span><span class="b2">[</span>j<span class="b2">]</span><span class="b1">)</span>;
        <span class="b3">}</span>
    <span class="b2">}</span>
    <span class="y">std</span>::<span class="f">swap</span><span class="b2">(</span><span class="v">arr</span><span class="b3">[</span>i + <span class="n">1</span><span class="b3">]</span>, <span class="v">arr</span><span class="b3">[</span>high<span class="b3">]</span><span class="b2">)</span>;
    <span class="p">return</span> <span class="b2">(</span>i + <span class="n">1</span><span class="b2">)</span>;
<span class="b1">}</span></div>
<div class="a mm" style="left:1533px;top:136px;width:120px;height:362px;overflow:hidden;opacity:.760"><div style="font-family:'Liberation Mono',monospace;font-size:10px;line-height:7.4074px;white-space:pre;color:#d4d4d4;font-weight:bold;text-rendering:geometricPrecision;-webkit-text-stroke:.300px;transform:translate(0,1.300px) scale(0.16667,0.27);transform-origin:0 0;width:1200px"><span class="c">//Function to sort an arry of strings in alphabetical order using the quicksort algorithm</span>
<span class="p">#include</span> <span class="s">&lt;iostream&gt;</span>
<span class="p">#include</span> <span class="s">&lt;string&gt;</span>
<span class="p">#include</span> <span class="s">&lt;algorithm&gt;</span>
<span class="p">#include</span> <span class="s">&lt;cstdlib&gt;</span>
<span class="p">#include</span> <span class="s">&lt;ctime&gt;</span>
<span class="p">#include</span> <span class="s">&lt;cassert&gt;</span>
<span class="p">#include</span> <span class="s">&lt;chrono&gt;</span>
<span class="p">#include</span> <span class="s">&lt;cstdio&gt;</span>

<span class="c">// Helper function to partition the array</span>
<span class="k">int</span> <span class="f">partition</span><span class="b1">(</span><span class="k">char</span> <span class="k">*</span><span class="v">arr</span><span class="b2">[]</span>, <span class="k">int</span> <span class="v">low</span>, <span class="k">int</span> <span class="v">high</span><span class="b1">)</span>;

<span class="c">// Function to sort an array of strings in alphabetical order using the quicksort algorithm</span>
<span class="k">void</span> <span class="f">quicksort</span><span class="b1">(</span><span class="k">char</span> <span class="k">*</span><span class="v">arr</span><span class="b2">[]</span>, <span class="k">int</span> <span class="v">low</span>, <span class="k">int</span> <span class="v">high</span><span class="b1">)</span> <span class="b1">{</span>
    <span class="p">if</span> <span class="b2">(</span>low &lt; high<span class="b2">)</span> <span class="b2">{</span>
        <span class="k">int</span> pivotIndex = <span class="f">partition</span><span class="b3">(</span>arr, low, high<span class="b3">)</span>;

        <span class="c">// Recursively sort elements before and after the pivot</span>
        <span class="f">quicksort</span><span class="b3">(</span>arr, low, pivotIndex − <span class="n">1</span><span class="b3">)</span>;
        <span class="f">quicksort</span><span class="b3">(</span>arr, pivotIndex + <span class="n">1</span>, high<span class="b3">)</span>;
    <span class="b2">}</span>
<span class="b1">}</span>

<span class="c">// Helper function to partition the array</span>
<span class="k">int</span> <span class="f">partition</span><span class="b1">(</span><span class="k">char</span> <span class="k">*</span><span class="v">arr</span><span class="b2">[]</span>, <span class="k">int</span> <span class="v">low</span>, <span class="k">int</span> <span class="v">high</span><span class="b1">)</span> <span class="b1">{</span>
    <span class="c">// Choose the rightmost element as pivot</span>
    <span class="k">char</span> *pivot = <span class="v">arr</span><span class="b2">[</span>high<span class="b2">]</span>;

    <span class="c">// Pointer for greater element</span>
    <span class="k">int</span> i = low − <span class="n">1</span>;

    <span class="c">// Traverse through all elements</span>
    <span class="p">for</span> <span class="b2">(</span><span class="k">int</span> j = low; j &lt;= high − <span class="n">1</span>; j++<span class="b2">)</span> <span class="b2">{</span>
        <span class="c">// Swap elements if current element is smaller than pivot</span>
        <span class="p">if</span> <span class="b3">(</span><span class="y">std</span>::<span class="f">strcmp</span><span class="b1">(</span><span class="v">arr</span><span class="b2">[</span>j<span class="b2">]</span>, pivot<span class="b1">)</span> &lt; <span class="n">0</span><span class="b3">)</span> <span class="b3">{</span>
            i++;
            <span class="y">std</span>::<span class="f">swap</span><span class="b1">(</span><span class="v">arr</span><span class="b2">[</span>i<span class="b2">]</span>, <span class="v">arr</span><span class="b2">[</span>j<span class="b2">]</span><span class="b1">)</span>;
        <span class="b3">}</span>
    <span class="b2">}</span>
    <span class="y">std</span>::<span class="f">swap</span><span class="b2">(</span><span class="v">arr</span><span class="b3">[</span>i + <span class="n">1</span><span class="b3">]</span>, <span class="v">arr</span><span class="b3">[</span>high<span class="b3">]</span><span class="b2">)</span>;
    <span class="p">return</span> <span class="b2">(</span>i + <span class="n">1</span><span class="b2">)</span>;
<span class="b1">}</span>


<span class="c">// Test cases</span>
<span class="k">void</span> <span class="f">runTests</span>() {
    <span class="c">// Test 1: Array with 1000 elements in alphabetical order</span>
    {
        <span class="k">auto</span> start = <span class="y">std</span>::<span class="y">chrono</span>::<span class="y">high_resolution_clock</span>::<span class="f">now</span>();

        <span class="k">char</span> *arr[<span class="n">1000</span>];
        <span class="y">std</span>::<span class="f">srand</span>(<span class="n">0</span>);
        <span class="p">for</span> (<span class="k">int</span> i = 0; i &lt; 1000; i++) {
            arr[i] = <span class="k">new</span> <span class="k">char</span>[<span class="n">10</span>];
            <span class="y">std</span>::<span class="f">snprintf</span>(arr[i], <span class="n">10</span>, <span class="s">"%04d"</span>, i);
        }
        <span class="f">quicksort</span>(arr, <span class="n">0</span>, <span class="n">999</span>);
        <span class="p">for</span> (<span class="k">int</span> i = 0; i &lt; 999; i++) {
            <span class="f">assert</span>(<span class="y">std</span>::<span class="f">strcmp</span>(arr[i], arr[i + 1]) &lt;= 0);
        }
        <span class="p">for</span> (<span class="k">int</span> i = 0; i &lt; 1000; i++) {
            <span class="p">delete[]</span> arr[i];
        }

        <span class="k">auto</span> end = <span class="y">std</span>::<span class="y">chrono</span>::<span class="y">high_resolution_clock</span>::<span class="f">now</span>();
        <span class="k">auto</span> duration = <span class="y">std</span>::<span class="y">chrono</span>::<span class="f">duration_cast</span>&lt;<span class="y">std</span>::<span class="y">chrono</span>::<span class="y">microseconds</span>&gt;(end - start);
        <span class="y">std</span>::cout &lt;&lt; <span class="s">"Test 1 took: "</span> &lt;&lt; duration.<span class="f">count</span>() &lt;&lt; <span class="s">" microseconds"</span> &lt;&lt; <span class="y">std</span>::endl;
    }

    <span class="c">// Test 2: Array with 1000 elements in reverse alphabetical order</span>
    {
        <span class="k">auto</span> start = <span class="y">std</span>::<span class="y">chrono</span>::<span class="y">high_resolution_clock</span>::<span class="f">now</span>();

        <span class="k">char</span> *arr[<span class="n">1000</span>];
        <span class="y">std</span>::<span class="f">srand</span>(<span class="n">0</span>);
        <span class="p">for</span> (<span class="k">int</span> i = 0; i &lt; 1000; i++) {
            arr[i] = <span class="k">new</span> <span class="k">char</span>[<span class="n">10</span>];
            <span class="y">std</span>::<span class="f">snprintf</span>(arr[i], <span class="n">10</span>, <span class="s">"%04d"</span>, 999 - i);
        }
        <span class="f">quicksort</span>(arr, <span class="n">0</span>, <span class="n">999</span>);
        <span class="p">for</span> (<span class="k">int</span> i = 0; i &lt; 999; i++) {
            <span class="f">assert</span>(<span class="y">std</span>::<span class="f">strcmp</span>(arr[i], arr[i + 1]) &lt;= 0);
        }
        <span class="p">for</span> (<span class="k">int</span> i = 0; i &lt; 1000; i++) {
            <span class="p">delete[]</span> arr[i];
        }

        <span class="k">auto</span> end = <span class="y">std</span>::<span class="y">chrono</span>::<span class="y">high_resolution_clock</span>::<span class="f">now</span>();
        <span class="k">auto</span> duration = <span class="y">std</span>::<span class="y">chrono</span>::<span class="f">duration_cast</span>&lt;<span class="y">std</span>::<span class="y">chrono</span>::<span class="y">microseconds</span>&gt;(end - start);
        <span class="y">std</span>::cout &lt;&lt; <span class="s">"Test 2 took: "</span> &lt;&lt; duration.<span class="f">count</span>() &lt;&lt; <span class="s">" microseconds"</span> &lt;&lt; <span class="y">std</span>::endl;
    }

    <span class="c">// Test 3: Array with 1000 elements containing duplicates</span>
    {
        <span class="k">auto</span> start = <span class="y">std</span>::<span class="y">chrono</span>::<span class="y">high_resolution_clock</span>::<span class="f">now</span>();

        <span class="k">char</span> *arr[<span class="n">1000</span>];
        <span class="y">std</span>::<span class="f">srand</span>(<span class="n">0</span>);
        <span class="p">for</span> (<span class="k">int</span> i = 0; i &lt; 1000; i++) {
            arr[i] = <span class="k">new</span> <span class="k">char</span>[<span class="n">10</span>];
            <span class="y">std</span>::<span class="f">snprintf</span>(arr[i], <span class="n">10</span>, <span class="s">"%04d"</span>, i % 100);
        }
        <span class="f">quicksort</span>(arr, <span class="n">0</span>, <span class="n">999</span>);
        <span class="p">for</span> (<span class="k">int</span> i = 0; i &lt; 999; i++) {
            <span class="f">assert</span>(<span class="y">std</span>::<span class="f">strcmp</span>(arr[i], arr[i + 1]) &lt;= 0);
        }
        <span class="p">for</span> (<span class="k">int</span> i = 0; i &lt; 1000; i++) {
            <span class="p">delete[]</span> arr[i];
        }

        <span class="k">auto</span> end = <span class="y">std</span>::<span class="y">chrono</span>::<span class="y">high_resolution_clock</span>::<span class="f">now</span>();
        <span class="k">auto</span> duration = <span class="y">std</span>::<span class="y">chrono</span>::<span class="f">duration_cast</span>&lt;<span class="y">std</span>::<span class="y">chrono</span>::<span class="y">microseconds</span>&gt;(end - start);
        <span class="y">std</span>::cout &lt;&lt; <span class="s">"Test 3 took: "</span> &lt;&lt; duration.<span class="f">count</span>() &lt;&lt; <span class="s">" microseconds"</span> &lt;&lt; <span class="y">std</span>::endl;
    }

    <span class="c">// Test 4: Array with 1000 elements containing random strings</span>
    {
        <span class="k">auto</span> start = <span class="y">std</span>::<span class="y">chrono</span>::<span class="y">high_resolution_clock</span>::<span class="f">now</span>();

        <span class="k">char</span> *arr[<span class="n">1000</span>];
        <span class="y">std</span>::<span class="f">srand</span>(<span class="n">0</span>);
        <span class="p">for</span> (<span class="k">int</span> i = 0; i &lt; 1000; i++) {
            arr[i] = <span class="k">new</span> <span class="k">char</span>[<span class="n">10</span>];
            <span class="p">for</span> (<span class="k">int</span> j = 0; j &lt; 9; j++) {
                arr[i][j] = <span class="s">'a'</span> + <span class="y">std</span>::<span class="f">rand</span>() % <span class="n">26</span>;
            }
            arr[i][<span class="n">9</span>] = <span class="s">'\0'</span>;
        }
        <span class="f">quicksort</span>(arr, <span class="n">0</span>, <span class="n">999</span>);
        <span class="p">for</span> (<span class="k">int</span> i = 0; i &lt; 999; i++) {
            <span class="f">assert</span>(<span class="y">std</span>::<span class="f">strcmp</span>(arr[i], arr[i + 1]) &lt;= 0);
        }

        <span class="p">for</span> (<span class="k">int</span> i = 0; i &lt; 1000; i++) {
            <span class="p">delete[]</span> arr[i];
        }

        <span class="k">auto</span> end = <span class="y">std</span>::<span class="y">chrono</span>::<span class="y">high_resolution_clock</span>::<span class="f">now</span>();
        <span class="k">auto</span> duration = <span class="y">std</span>::<span class="y">chrono</span>::<span class="f">duration_cast</span>&lt;<span class="y">std</span>::<span class="y">chrono</span>::<span class="y">microseconds</span>&gt;(end - start);
        <span class="y">std</span>::cout &lt;&lt; <span class="s">"Test 4 took: "</span> &lt;&lt; duration.<span class="f">count</span>() &lt;&lt; <span class="s">" microseconds"</span> &lt;&lt; <span class="y">std</span>::endl;
    }

    <span class="c">// Test 5: Array with 1000 elements containing strings with leading zeros</span>
    {
        <span class="k">auto</span> start = <span class="y">std</span>::<span class="y">chrono</span>::<span class="y">high_resolution_clock</span>::<span class="f">now</span>();

        <span class="k">char</span> *arr[<span class="n">1000</span>];
        <span class="y">std</span>::<span class="f">srand</span>(<span class="n">0</span>);
        <span class="p">for</span> (<span class="k">int</span> i = 0; i &lt; 1000; i++) {
            arr[i] = <span class="k">new</span> <span class="k">char</span>[<span class="n">10</span>];
            <span class="y">std</span>::<span class="f">snprintf</span>(arr[i], <span class="n">10</span>, <span class="s">"%04d"</span>, i);
        }
        <span class="f">quicksort</span>(arr, <span class="n">0</span>, <span class="n">999</span>);
        <span class="p">for</span> (<span class="k">int</span> i = 0; i &lt; 999; i++) {
            <span class="f">assert</span>(<span class="y">std</span>::<span class="f">strcmp</span>(arr[i], arr[i + 1]) &lt;= 0);
        }

        <span class="p">for</span> (<span class="k">int</span> i = 0; i &lt; 1000; i++) {
            <span class="p">delete[]</span> arr[i];
        }

        <span class="k">auto</span> end = <span class="y">std</span>::<span class="y">chrono</span>::<span class="y">high_resolution_clock</span>::<span class="f">now</span>();
        <span class="k">auto</span> duration = <span class="y">std</span>::<span class="y">chrono</span>::<span class="f">duration_cast</span>&lt;<span class="y">std</span>::<span class="y">chrono</span>::<span class="y">microseconds</span>&gt;(end - start);
        <span class="y">std</span>::cout &lt;&lt; <span class="s">"Test 5 took: "</span> &lt;&lt; duration.<span class="f">count</span>() &lt;&lt; <span class="s">" microseconds"</span> &lt;&lt; <span class="y">std</span>::endl;
    }

    <span class="y">std</span>::cout &lt;&lt; <span class="s">"All tests passed!"</span> &lt;&lt; <span class="y">std</span>::endl;
}

<span class="k">int</span> <span class="f">main</span>() {
    <span class="f">runTests</span>();
    <span class="p">return</span> <span class="n">0</span>;
}</div></div>
<div class="a" style="left:1644.6px;top:137px;width:0.8px;height:763px;background:#2e2e2e;"></div>
<div class="a" style="left:1645px;top:137.4px;width:13.7px;height:149.8px;background:#494949;"></div>
<div class="a" style="left:1645.6px;top:157.2px;width:13.1px;height:1.8px;background:#8a8a8a;"></div>
<div class="a" style="left:405px;top:900px;width:1253.7px;height:249px;background:#222222;"></div>
<div class="a" style="left:405px;top:900px;width:1253.7px;height:1px;background:#414141;"></div>
<div class="a" style="left:702.4px;top:899.8px;width:94.6px;height:1.2px;background:#e7e7e7;"></div>
<svg style="left:414px;top:910px;" width="15" height="14" fill="none"><g transform="translate(0.000 0.200)"><path d="M7 .900L13.300 12.100H.700z" stroke="#969696" stroke-width="1.100" stroke-linejoin="round"/><path d="M7 4.600v4M7 9.600v1.300" stroke="#969696" stroke-width="1.100"/></g></svg>
<span class="t" style="left:435.93px;top:907.75px;font-size:13px;color:#969696;letter-spacing:0.419px;">Problems</span>
<svg style="left:530px;top:910px;" width="16" height="15" fill="none"><g transform="translate(0.000 0.000)"><rect x=".600" y=".600" width="13.100" height="12.800" rx="1.200" stroke="#969696" stroke-width="1.100"/><path d="M3.200 4.200l3.100 2.800-3.100 2.800M7.400 10h3.400" stroke="#969696" stroke-width="1.100"/></g></svg>
<span class="t" style="left:552.26px;top:907.75px;font-size:13px;color:#969696;letter-spacing:0.704px;">zsh</span>
<span class="t" style="left:609.56px;top:907.75px;font-size:13px;color:#969696;letter-spacing:0.341px;">Task: Build</span>
<span class="t" style="left:711.00px;top:907.75px;font-size:13px;color:#e7e7e7;letter-spacing:0.046px;">Task: Run</span>
<svg style="left:778px;top:913px;" width="10" height="10" fill="none"><g transform="translate(0.600 0.800)"><path d="M.500 .500l7.800 7.800M8.300 .500L.500 8.300" stroke="#d8d8d8" stroke-width="1.200"/></g></svg>
<svg style="left:1607px;top:909px;" width="15" height="15" fill="none"><g transform="translate(0.000 0.800)"><rect x=".650" y=".650" width="11.900" height="11.900" rx="1" stroke="#c5c5c5" stroke-width="1.200"/><path d="M6.600 .650v11.900" stroke="#c5c5c5" stroke-width="1.200"/></g></svg>
<svg style="left:1631px;top:911px;" width="16" height="13" fill="none"><g transform="translate(0.800 0.000)"><rect x=".600" y=".600" width="13.100" height="10.800" rx=".600" stroke="#c5c5c5" stroke-width="1.200"/><path d="M.600 3.100h13.100" stroke="#c5c5c5" stroke-width="1.100"/></g></svg>
<div class="term" style="top:938.300px"><b>&gt; Executing task: /bin/zsh −c ./build/Release/outRelease &lt;</b>


<b>Terminal will be reused by tasks.</b>

Test 1 took: 1976 microseconds
Test 2 took: 1935 microseconds
Test 3 took: 420 microseconds
Test 4 took: 298 microseconds
Test 5 took: 1985 microseconds
All tests passed!</div>
<div class="a" style="left:410.300px;top:1092px;width:7.500px;height:12.300px;border:1px solid #d0d0d0"></div>
<div class="a" style="left:0;top:1149px;width:1707px;height:22px;background:#2a7bcc;border-radius:0 0 7px 7px"></div>
<div class="a" style="left:0;top:1149px;width:34px;height:22px;background:#2e8461;border-radius:0 0 0 7px"></div>
<svg style="left:10px;top:1150px;" width="15" height="19" fill="none"><g transform="translate(0.000 0.000)"><path d="M2.800 7.100l4.400 4.100-4.400 4.200M11.200 4.050L7.200 7.900l4 3.800" stroke="#fff" stroke-width="1"/></g></svg>
<svg style="left:41px;top:1154px;" width="15" height="15" fill="none"><g transform="translate(0.000 0.000)"><path d="M.700 10.600V1.200h3.900l.800 1.300h6.400v3.800" stroke="#fff" stroke-width="1.100"/><path d="M5 2.600h6.800" stroke="#fff" stroke-width="1.900"/><path d="M.700 10.500h5.200" stroke="#fff" stroke-width="1.100"/><circle cx="9.500" cy="9.600" r="3.300" fill="#fff"/><path d="M8 9.700l1.100 1.100 2-2.300" stroke="#2a7bcc" stroke-width="1"/></g></svg>
<span class="t" style="left:57.30px;top:1151.25px;font-size:12px;color:#ffffff;letter-spacing:0.238px;-webkit-text-stroke:.120px;">Code/Tabnine</span>
<svg style="left:147px;top:1153px;" width="14" height="14" fill="none"><g transform="translate(0.500 0.800)"><path d="M1.500 1.300l2.200.900.600 1.800 6.800 6.900-1.300 1.300L3 5.400 1.300 4.700z" stroke="#fff" stroke-width=".900"/><path d="M11.900 2.600l-2 2-1.400-.300-.300-1.400 2-2a3 3 0 0 0-3.700 3.900L1.200 10.200a1.300 1.300 0 0 0 1.900 1.900l5.300-5.400a3 3 0 0 0 3.500-4.100z" stroke="#fff" stroke-width=".900"/></g></svg>
<span class="t" style="left:164.50px;top:1151.25px;font-size:12px;color:#ffffff;letter-spacing:-0.242px;-webkit-text-stroke:.120px;">Release</span>
<svg style="left:220px;top:1153px;" width="14" height="14" fill="none"><g transform="translate(0.600 0.750)"><path d="M5.44 2.33L5.62 1.07L7.38 1.07L7.56 2.33L8.69 2.80L9.72 2.04L10.96 3.28L10.20 4.31L10.67 5.44L11.93 5.62L11.93 7.38L10.67 7.56L10.20 8.69L10.96 9.72L9.72 10.96L8.69 10.20L7.56 10.67L7.38 11.93L5.62 11.93L5.44 10.67L4.31 10.20L3.28 10.96L2.04 9.72L2.80 8.69L2.33 7.56L1.07 7.38L1.07 5.62L2.33 5.44L2.80 4.31L2.04 3.28L3.28 2.04L4.31 2.80Z" stroke="#fff" stroke-width=".900" stroke-linejoin="round"/><circle cx="6.500" cy="6.500" r="1.700" stroke="#fff" stroke-width=".900"/></g></svg>
<svg style="left:248px;top:1154px;" width="11" height="13" fill="none"><g transform="translate(0.100 0.600)"><path d="M.600 .900v9.700l8-4.850z" stroke="#fff" stroke-width="1" stroke-linejoin="round"/></g></svg>
<svg style="left:273px;top:1153px;" width="12" height="13" fill="none"><g transform="translate(0.400 0.800)"><path d="M.300 2.500h9.900M3.500 2.300V.700h3.500v1.600M1.500 2.700l.500 8.600h6.500l.500-8.600M3.900 4.500v5M6.600 4.500v5" stroke="#fff" stroke-width="1"/></g></svg>
<svg style="left:299px;top:1153px;" width="14" height="14" fill="none"><g transform="translate(0.000 0.500)"><path d="M3.500 4.600a2.750 2.750 0 0 1 5.500 0v4.200a2.750 2.750 0 0 1-5.500 0zM3.500 5.300h5.500M4.200 2.600L2.800 1M8.300 2.600L9.700 1M.300 7h3.200M9 7h3.200M.800 11.800l2.900-1.600M11.700 11.800l-2.900-1.600M.800 3.200l2.700 1.600M11.700 3.200L9 4.800" stroke="#fff" stroke-width=".900"/></g></svg>
<svg style="left:324px;top:1153px;" width="14" height="14" fill="none"><g transform="translate(0.900 0.800)"><circle cx="6.100" cy="6.100" r="5.500" stroke="#fff" stroke-width="1"/><path d="M3.800 3.800l4.600 4.600M8.400 3.800L3.800 8.400" stroke="#fff" stroke-width="1"/></g></svg>
<span class="t" style="left:341.23px;top:1151.25px;font-size:12px;color:#ffffff;-webkit-text-stroke:.120px;">0</span>
<svg style="left:352px;top:1154px;" width="14" height="13" fill="none"><g transform="translate(0.700 0.000)"><path d="M6.250 .900L11.900 10.900H.600z" stroke="#fff" stroke-width="1" stroke-linejoin="round"/><path d="M6.250 4.200v3.600M6.250 8.700v1.100" stroke="#fff" stroke-width="1"/></g></svg>
<span class="t" style="left:369.23px;top:1151.25px;font-size:12px;color:#ffffff;-webkit-text-stroke:.120px;">0</span>
<span class="t" style="left:1388.10px;top:1151.25px;font-size:12px;color:#ffffff;letter-spacing:-0.022px;-webkit-text-stroke:.120px;">Ln 7, Col 19</span>
<span class="t" style="left:1464.85px;top:1151.25px;font-size:12px;color:#ffffff;letter-spacing:0.784px;-webkit-text-stroke:.120px;">LF</span>
<span class="t" style="left:1491.20px;top:1151.25px;font-size:12px;color:#ffffff;letter-spacing:0.419px;-webkit-text-stroke:.120px;">UTF-8</span>
<span class="t" style="left:1539.49px;top:1151.25px;font-size:12px;color:#ffffff;letter-spacing:0.373px;-webkit-text-stroke:.120px;">Spaces: 4</span>
<span class="t" style="left:1607.78px;top:1151.25px;font-size:12px;color:#ffffff;letter-spacing:0.686px;-webkit-text-stroke:.120px;">C++</span>
<span class="t" style="left:1660.83px;top:1151.25px;font-size:12px;color:#ffffff;-webkit-text-stroke:.120px;">1</span>
<svg style="left:1644px;top:1153px;" width="14" height="14" fill="none"><g transform="translate(0.600 0.600)"><path d="M2.300 9.700V6a3.900 3.900 0 0 1 5-3.700M10.100 6.500v3.200l1.200 1.300H1.100l1.200-1.300M4.800 11.200a1.500 1.500 0 0 0 2.900 0" stroke="#fff" stroke-width="1"/><circle cx="9.700" cy="3" r="2.300" fill="#fff"/></g></svg>
<svg style="left:1679px;top:1154px;" width="14" height="12" fill="none"><g transform="translate(0.300 0.800)"><rect x=".600" y=".600" width="11" height="9.600" stroke="#fff" stroke-width="1.100"/><path d="M.600 3h11" stroke="#fff" stroke-width="1.100"/></g></svg>
<div class="a" style="left:0px;top:1170px;width:1709px;height:1px;background:rgba(155,150,140,.320);"></div>
<div class="a" style="left:1057px;top:1171px;width:526px;height:1px;background:#0c0c0c;"></div>
</div></body></html>
